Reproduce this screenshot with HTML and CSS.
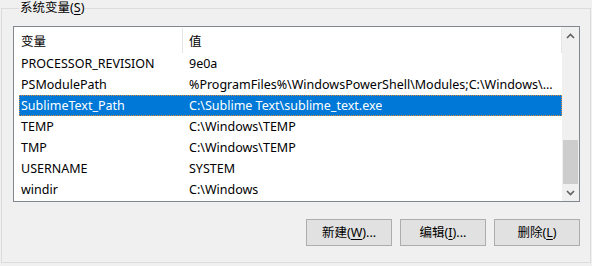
FILE: index.html
```html
<!DOCTYPE html>
<html lang="zh-CN">
<head>
<meta charset="utf-8">
<link rel="stylesheet" href="styles.css">
</head>
<body>
<fieldset class="group">
  <legend class="group-title">系统变量(<u>S</u>)</legend>
  <div class="listbox">
    <div class="list-main">
      <div class="list-header">
        <div class="hcol hcol-name">变量</div>
        <div class="hcol hcol-value">值</div>
      </div>
      <div class="rows">
        <div class="row"><span class="c1">PROCESSOR_REVISION</span><span class="c2">9e0a</span></div>
        <div class="row"><span class="c1">PSModulePath</span><span class="c2">%ProgramFiles%\WindowsPowerShell\Modules;C:\Windows\...</span></div>
        <div class="row selected"><span class="c1">SublimeText_Path</span><span class="c2">C:\Sublime Text\sublime_text.exe</span></div>
        <div class="row"><span class="c1">TEMP</span><span class="c2">C:\Windows\TEMP</span></div>
        <div class="row"><span class="c1">TMP</span><span class="c2">C:\Windows\TEMP</span></div>
        <div class="row"><span class="c1">USERNAME</span><span class="c2">SYSTEM</span></div>
        <div class="row"><span class="c1">windir</span><span class="c2">C:\Windows</span></div>
      </div>
    </div>
    <div class="scrollbar">
      <div class="sb-btn">
        <svg width="9" height="6" viewBox="0 0 9 6"><path d="M1 5 L4.5 1.5 L8 5" fill="none" stroke="#606060" stroke-width="1.6"/></svg>
      </div>
      <div class="sb-track">
        <div class="sb-thumb"></div>
      </div>
      <div class="sb-btn">
        <svg width="9" height="6" viewBox="0 0 9 6"><path d="M1 1 L4.5 4.5 L8 1" fill="none" stroke="#606060" stroke-width="1.6"/></svg>
      </div>
    </div>
  </div>
  <div class="buttons">
    <button class="btn">新建(<u>W</u>)...</button>
    <button class="btn">编辑(<u>I</u>)...</button>
    <button class="btn">删除(<u>L</u>)</button>
  </div>
</fieldset>
</body>
</html>
```

FILE: styles.css
```css
html, body {
  margin: 0;
  padding: 0;
}
body {
  width: 592px;
  height: 266px;
  background: #f0f0f0;
  font-family: "Noto Sans", "Noto Sans CJK SC", sans-serif;
  font-size: 12.5px;
  color: #000;
  overflow: hidden;
}
.group {
  box-sizing: border-box;
  width: 590px;
  height: 263px;
  margin: 0 0 0 1px;
  padding: 10px 10px 0 11px;
  border: 1px solid #dcdcdc;
  min-width: 0;
}
.group-title {
  margin-left: 6px;
  padding: 0 1px;
  line-height: 16px;
  height: 16px;
}
.listbox {
  box-sizing: border-box;
  width: 567px;
  height: 176px;
  border: 1px solid #828790;
  background: #fff;
  display: flex;
  overflow: hidden;
}
.list-main {
  flex: 1;
  min-width: 0;
  display: flex;
  flex-direction: column;
}
.list-header {
  height: 25px;
  flex: none;
  display: flex;
  align-items: stretch;
  border-right: 1px solid #e5e5e5;
  margin-top: 1px;
}
.hcol {
  display: flex;
  align-items: center;
  line-height: 16px;
  padding-top: 2px;
  box-sizing: border-box;
}
.hcol-name {
  width: 169px;
  padding-left: 7px;
  border-right: 1px solid #e5e5e5;
}
.hcol-value {
  padding-left: 6px;
}
.rows {
  padding-left: 5px;
}
.row {
  box-sizing: border-box;
  height: 21px;
  display: flex;
  align-items: center;
  white-space: nowrap;
  line-height: 16px;
  padding-top: 1px;
}
.row.selected {
  background: #0078d7;
  color: #fff;
  outline: 1px dotted #d98a3a;
  outline-offset: -1px;
}
.c1 {
  width: 168px;
  padding-left: 2px;
  flex: none;
}
.c2 {
  overflow: hidden;
}
.scrollbar {
  width: 17px;
  flex: none;
  background: #f0f0f0;
  display: flex;
  flex-direction: column;
}
.sb-btn {
  height: 17px;
  display: flex;
  align-items: center;
  justify-content: center;
  flex: none;
}
.sb-track {
  flex: 1;
  display: flex;
  flex-direction: column;
  justify-content: flex-end;
  padding: 0 1px 0 1px;
}
.sb-thumb {
  height: 44px;
  background: #cdcdcd;
}
.buttons {
  display: flex;
  justify-content: flex-end;
  gap: 8px;
  margin-top: 17px;
  width: 567px;
}
.btn {
  box-sizing: border-box;
  width: 86px;
  height: 27px;
  background: #e1e1e1;
  border: 1px solid #adadad;
  border-radius: 0;
  font-family: "Noto Sans", "Noto Sans CJK SC", sans-serif;
  font-size: 12.5px;
  color: #000;
  padding: 0;
  line-height: 16px;
}
.btn u, .group-title u {
  text-decoration-thickness: 1px;
  text-underline-offset: 2px;
}
```
